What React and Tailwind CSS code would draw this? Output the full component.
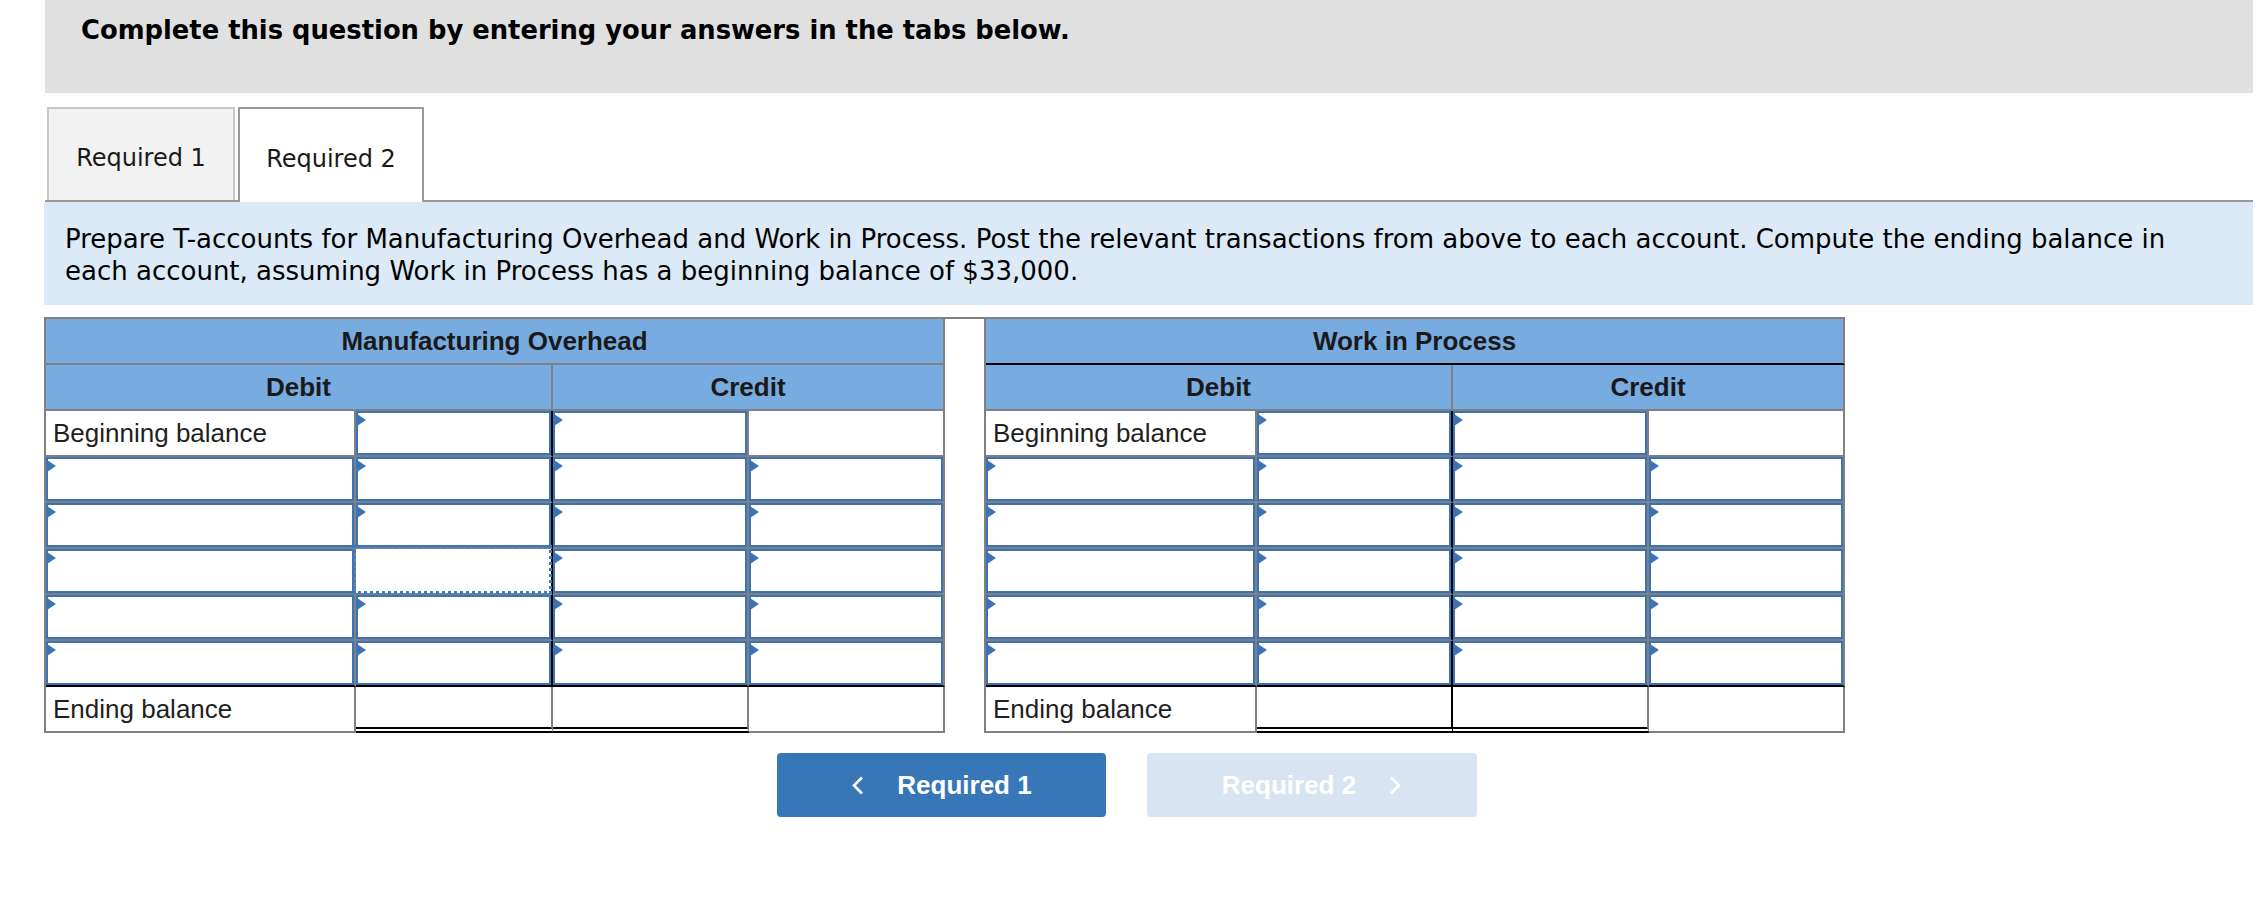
import React from 'react';

const Tri = () => (
  <svg className="absolute left-[-1px] top-[1px]" width="9" height="12" viewBox="0 0 9 12">
    <path d="M0 0L9 6L0 12Z" fill="#3a74b6" />
  </svg>
);

const Entry = ({ focus }) =>
  focus ? (
    <div className="relative h-[44px] bg-white">
      <div className="absolute -left-[3px] -right-[1px] -top-[4px] -bottom-[1px] z-10 border-[3px] border-dotted border-[#3a7bc4]" />
    </div>
  ) : (
    <div className="relative h-[44px] border-2 border-[#3a74b6] bg-white">
      <Tri />
    </div>
  );

const Label = ({ children }) => (
  <div className="h-[44px] px-[7px] text-[26px] leading-[44px] text-[#1f1f1f] whitespace-nowrap">{children}</div>
);

// one T-account's cells for a given row
const rowCells = (row, side, focusCol) => {
  const tline = 'border-r-2 border-r-black';
  const gray = 'border-r-2 border-r-[#808080]';
  const bottom = row === 5 ? 'border-b-2 border-b-black' : 'border-b-2 border-b-[#808080]';
  if (row === 0) {
    return [
      <td key={side + 'a'} className={`p-0 ${gray} ${bottom}`}><Label>Beginning balance</Label></td>,
      <td key={side + 'b'} className={`p-0 ${tline} ${bottom}`}><Entry /></td>,
      <td key={side + 'c'} className={`p-0 ${gray} ${bottom}`}><Entry /></td>,
      <td key={side + 'd'} className={`p-0 ${gray} ${bottom}`}><div className="h-[44px]" /></td>,
    ];
  }
  return [0, 1, 2, 3].map((c) => (
    <td key={side + c} className={`p-0 ${c === 1 ? tline : gray} ${bottom}`}>
      <Entry focus={focusCol === c} />
    </td>
  ));
};

const endCells = (side, blackT) => [
  <td key={side + 'a'} className="p-0 border-r-2 border-r-[#808080] border-b-2 border-b-[#808080]"><Label>Ending balance</Label></td>,
  <td key={side + 'b'} className={blackT ? 'p-0 border-r-2 border-r-black border-b-[6px] border-double border-b-black' : 'p-0 border-r-2 border-r-[#808080] border-b-[6px] border-double border-b-black'}><div className="h-[40px]" /></td>,
  <td key={side + 'c'} className="p-0 border-r-2 border-r-[#808080] border-b-[6px] border-double border-b-black"><div className="h-[40px]" /></td>,
  <td key={side + 'd'} className="p-0 border-r-2 border-r-[#808080] border-b-2 border-b-[#808080]"><div className="h-[44px]" /></td>,
];

const TAccounts = () => {
  const head = 'p-0 h-[46px] bg-[#78ace1] text-[26px] font-bold text-[#1a1a1a] text-center border-r-2 border-r-[#808080]';
  return (
    <table className="ml-[44px] mt-[12px] table-fixed border-separate border-spacing-0 border-l-2 border-t-2 border-[#808080] w-[1801px] font-['Liberation_Sans',Arial,sans-serif]">
      <colgroup>
        <col className="w-[310px]" />
        <col className="w-[197px]" />
        <col className="w-[196px]" />
        <col className="w-[196px]" />
        <col className="w-[41px]" />
        <col className="w-[271px]" />
        <col className="w-[196px]" />
        <col className="w-[196px]" />
        <col className="w-[196px]" />
      </colgroup>
      <tbody>
        <tr>
          <td colSpan={4} className={`${head} border-b-2 border-b-[#808080]`}>Manufacturing Overhead</td>
          <td rowSpan={9} className="p-0 bg-white border-r-2 border-r-[#808080]" />
          <td colSpan={4} className={`${head} border-b-2 border-b-black`}>Work in Process</td>
        </tr>
        <tr>
          <td colSpan={2} className={`${head} border-b-2 border-b-[#808080]`}>Debit</td>
          <td colSpan={2} className={`${head} border-b-2 border-b-[#808080]`}>Credit</td>
          <td colSpan={2} className={`${head} border-b-2 border-b-[#808080]`}>Debit</td>
          <td colSpan={2} className={`${head} border-b-2 border-b-[#808080]`}>Credit</td>
        </tr>
        {[0, 1, 2, 3, 4, 5].map((r) => (
          <tr key={r}>
            {rowCells(r, 'm', r === 3 ? 1 : -1)}
            {rowCells(r, 'w', -1)}
          </tr>
        ))}
        <tr>
          {endCells('m', false)}
          {endCells('w', true)}
        </tr>
      </tbody>
    </table>
  );
};

const Chevron = ({ dir }) => (
  <svg width="13" height="19" viewBox="0 0 13 19" fill="none">
    <path
      d={dir === 'left' ? 'M11 1.5L3 9.5L11 17.5' : 'M2 1.5L10 9.5L2 17.5'}
      stroke="white"
      strokeWidth="2.6"
    />
  </svg>
);

export default function App() {
  return (
    <div className="w-[2264px] h-[912px] bg-white overflow-hidden font-['DejaVu_Sans',Verdana,sans-serif] text-[#1a1a1a]">
      <div className="ml-[45px] mr-[11px] h-[93px] bg-[#e0e0e0] pl-[36px] pt-[15px] text-[25.8px] font-bold text-black leading-[30px]">
        Complete this question by entering your answers in the tabs below.
      </div>

      <div className="ml-[45px] mr-[11px] mt-[14px] flex items-end gap-[3px] pl-[2px] border-b-2 border-[#999999]">
        <div className="h-[93px] w-[188px] pt-[6px] flex items-center justify-center bg-[#f2f2f2] border-2 border-b-0 border-[#c8c8c8] text-[24px]">
          Required 1
        </div>
        <div className="h-[95px] w-[186px] pt-[6px] -mb-[2px] flex items-center justify-center bg-white border-2 border-b-0 border-[#999999] text-[24px]">
          Required 2
        </div>
      </div>

      <div className="ml-[44px] mr-[11px] bg-[#dbeaf6] pl-[21px] pr-[20px] pt-[21px] pb-[18px] text-[26px] leading-[32px] text-black">
        Prepare T-accounts for Manufacturing Overhead and Work in Process. Post the relevant transactions from above to each account. Compute the ending balance in
        <br />
        each account, assuming Work in Process has a beginning balance of $33,000.
      </div>

      <TAccounts />

      <div className="mt-[20px] ml-[777px] flex gap-[41px] font-['Liberation_Sans',Arial,sans-serif]">
        <button className="h-[64px] w-[329px] rounded-[4px] bg-[#3777b7] flex items-center justify-center gap-[33px] text-white text-[26px] font-bold">
          <Chevron dir="left" />
          <span>Required 1</span>
        </button>
        <button className="h-[64px] w-[330px] rounded-[4px] bg-[#d8e4f1] flex items-center justify-center gap-[33px] text-white text-[26px] font-bold">
          <span>Required 2</span>
          <Chevron dir="right" />
        </button>
      </div>
    </div>
  );
}
